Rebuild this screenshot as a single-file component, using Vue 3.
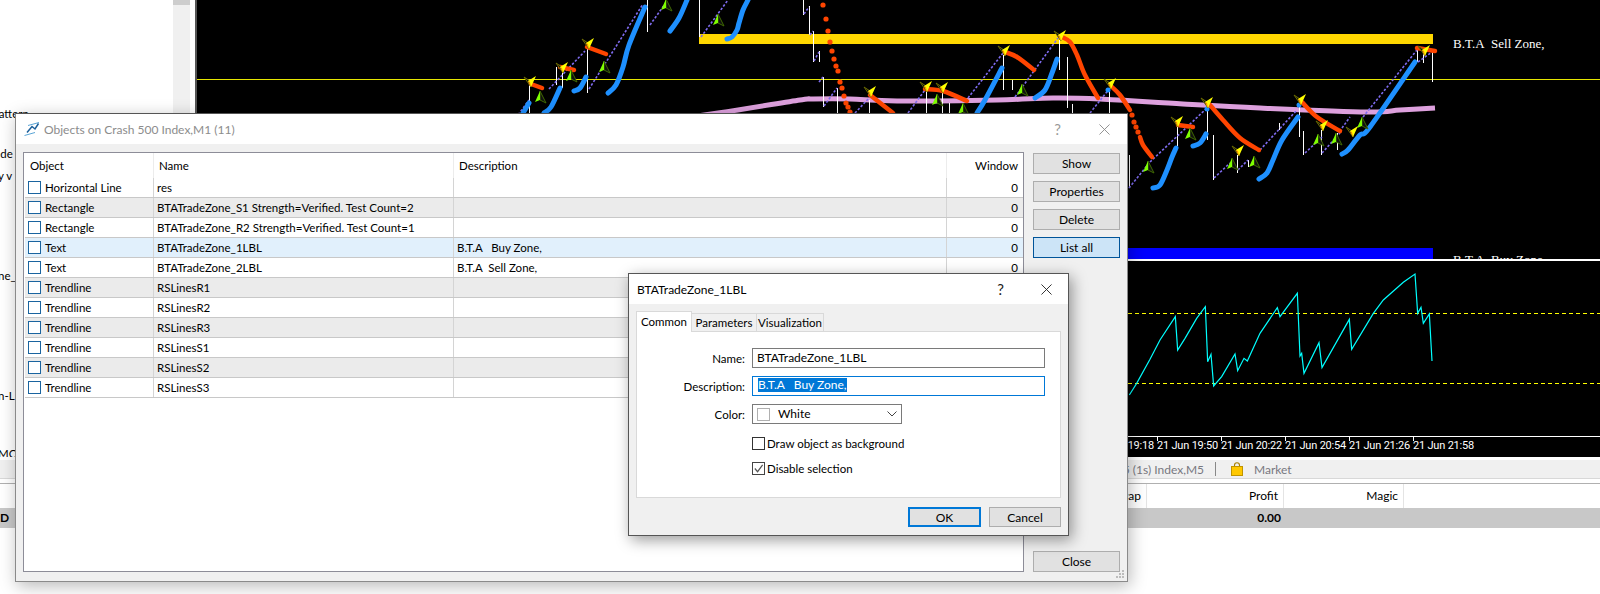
<template>
  <div class="screen">
    <!-- terminal behind the dialogs -->
    <div class="terminal">
      <div class="top-area">
        <aside class="navigator">
          <div class="nav-list">
            <div class="nav-lines">
              <div class="nav-line line-1">Pattern</div>
              <div class="nav-line line-2">Trade</div>
              <div class="nav-line line-3">y v</div>
              <div class="nav-line line-4">ne_</div>
              <div class="nav-line line-5">n-L</div>
              <div class="nav-line line-6">MO</div>
            </div>
            <div class="nav-foot"></div>
          </div>
          <div class="nav-scroll"><div class="nav-thumb"></div></div>
        </aside>
        <div class="charts">
          <div class="main-chart">
            <svg class="chart-svg" viewBox="197 0 1403 259" width="1403" height="259">
              <rect x="699" y="34" width="734" height="10" fill="#ffd700" />
              <rect x="699" y="248" width="734" height="11" fill="#0000ff" />
              <line x1="197" y1="79.5" x2="1600" y2="79.5" stroke="#e6e600" stroke-width="1" />
              <path :d="smooth(pinkLine)" fill="none" stroke="#dda0dd" stroke-width="5" />
              <line v-for="(w, i) in wicks" :key="'w' + i" :x1="w[0] + 0.5" :y1="w[1]" :x2="w[0] + 0.5" :y2="w[2]" stroke="#fff" stroke-width="1" shape-rendering="crispEdges" />
              <line v-for="(p, i) in rises" :key="'p' + i" :x1="p[0]" :y1="p[1]" :x2="p[2]" :y2="p[3]" stroke="#7f6cf0" stroke-width="1.6" stroke-dasharray="2.4 1.8" />
              <path v-for="(b, i) in blueCurves" :key="'b' + i" :d="smooth(b)" fill="none" stroke="#1e90ff" stroke-width="5" stroke-linecap="round" stroke-linejoin="round" />
              <path v-for="(r, i) in redCurves" :key="'r' + i" :d="smooth(r)" fill="none" stroke="#ff4500" stroke-width="4.5" stroke-linecap="round" stroke-linejoin="round" />
              <circle v-for="(d, i) in redDots" :key="'d' + i" :cx="d[0]" :cy="d[1]" r="2.6" fill="#ff4500" />
              <circle v-for="(d, i) in blueDots" :key="'bd' + i" :cx="d[0]" :cy="d[1]" r="2.5" fill="#1e90ff" />
              <g v-for="(a, i) in yellowArrows" :key="'y' + i" :transform="`translate(${a[0]} ${a[1]})`">
                <path d="M-6 -5 L0 -1 L1 5 Z" fill="#111" stroke="#6b6b00" stroke-width="1" />
                <path d="M6 -6 L-2 -1 L1 5 Z" fill="#ffff00" />
                <path d="M-2 -1 L1 5 L0 0 Z" fill="#ff8c00" />
              </g>
              <g v-for="(a, i) in greenArrows" :key="'g' + i" :transform="`translate(${a[0]} ${a[1]})`">
                <path d="M0 -6 L6 6 L0 3 Z" fill="#111" stroke="#3f6a00" stroke-width="1" />
                <path d="M0 -6 L-5 5 L0 3 Z" fill="#7fff00" />
              </g>
            </svg>
            <span class="zone-label sell">B.T.A&nbsp; Sell Zone,</span>
            <span class="zone-label buy">B.T.A&nbsp; Buy Zone,</span>
          </div>
          <div class="sub-chart">
            <svg class="chart-svg" viewBox="197 261 1403 175" width="1403" height="175">
              <line x1="197" y1="313.5" x2="1600" y2="313.5" stroke="#ffff00" stroke-dasharray="4 3" />
              <line x1="197" y1="383.5" x2="1600" y2="383.5" stroke="#ffff00" stroke-dasharray="4 3" />
              <polyline :points="cyanLine" fill="none" stroke="#00ffff" stroke-width="1.2" />
            </svg>
          </div>
          <div class="time-axis">
            <div v-for="t in timeLabels" :key="t" class="tick">{{ t }}</div>
          </div>
        </div>
      </div>

      <div class="tab-bar">
        <span class="tab-name">Volatility 75 (1s) Index,M5</span>
        <span class="tab-sep"></span>
        <svg class="lock" viewBox="0 0 12 14" width="12" height="14">
          <path d="M3.5 5 V3.2 A2.5 2.5 0 0 1 8.5 3.2 V5" fill="none" stroke="#a87f00" stroke-width="1.1" />
          <rect x="0.5" y="4.5" width="11" height="9" fill="#ffc800" stroke="#c09400" />
        </svg>
        <span class="tab-market">Market</span>
      </div>

      <div class="trade-head">
        <span class="col-swap">Swap</span>
        <span class="col-profit">Profit</span>
        <span class="col-magic">Magic</span>
        <span class="col-rest"></span>
      </div>
      <div class="trade-total">
        <span class="total-cur">D</span>
        <span class="total-profit">0.00</span>
      </div>
    </div>

    <!-- objects list window -->
    <section class="objects-window">
      <header class="win-title">
        <svg class="win-icon" viewBox="0 0 16 16" width="16" height="16">
          <path d="M4 4.5 L15 1.5 M0.5 14.5 L11 11.5" stroke="#5aa5d6" stroke-width="1" fill="none" />
          <path d="M3 11.5 L8 5.5 L11 8 L14.5 2.5" stroke="#1c5f9a" stroke-width="1.5" fill="none" />
        </svg>
        <span class="win-caption">Objects on Crash 500 Index,M1 (11)</span>
        <span class="help muted">?</span>
        <svg class="close-x" viewBox="0 0 12 12" width="11" height="11"><path d="M0.5 0.5 L11.5 11.5 M11.5 0.5 L0.5 11.5" stroke="#8a8a8a" stroke-width="1" /></svg>
      </header>
      <div class="win-body">
        <div class="object-list">
          <div class="list-row list-head">
            <span class="cell">Object</span>
            <span class="cell">Name</span>
            <span class="cell">Description</span>
            <span class="cell num">Window</span>
          </div>
          <div
            v-for="(row, i) in objects"
            :key="row.name"
            class="list-row"
            :class="{ odd: i % 2 === 1, picked: row.name === 'BTATradeZone_1LBL' }"
          >
            <span class="cell obj"><i class="obj-check"></i>{{ row.type }}</span>
            <span class="cell nm">{{ row.name }}</span>
            <span class="cell desc">{{ row.desc }}</span>
            <span class="cell num">0</span>
          </div>
        </div>
        <div class="side-buttons">
          <div class="side-top">
            <button class="btn">Show</button>
            <button class="btn">Properties</button>
            <button class="btn">Delete</button>
            <button class="btn active">List all</button>
          </div>
          <button class="btn">Close</button>
        </div>
      </div>
      <svg class="grip" viewBox="0 0 9 9" width="9" height="9">
        <path d="M6 0h2v2h-2z M3 3h2v2h-2z M6 3h2v2h-2z M0 6h2v2h-2z M3 6h2v2h-2z M6 6h2v2h-2z" fill="#bcbcbc" />
      </svg>
    </section>

    <!-- properties dialog -->
    <section class="prop-dialog">
      <header class="dlg-title">
        <span class="dlg-caption">BTATradeZone_1LBL</span>
        <span class="help">?</span>
        <svg class="close-x" viewBox="0 0 12 12" width="11" height="11"><path d="M0.5 0.5 L11.5 11.5 M11.5 0.5 L0.5 11.5" stroke="#222" stroke-width="1" /></svg>
      </header>
      <div class="dlg-body">
        <div class="tabs">
          <span class="tab current">Common</span>
          <span class="tab tab-params">Parameters</span>
          <span class="tab tab-vis">Visualization</span>
        </div>
        <div class="tab-panel">
          <div class="form">
            <label>Name:</label>
            <div class="field">BTATradeZone_1LBL</div>
            <label>Description:</label>
            <div class="field focus"><span class="selected">B.T.A&nbsp;&nbsp; Buy Zone,</span></div>
            <label>Color:</label>
            <div class="field select">
              <i class="swatch"></i>
              <span>White</span>
              <svg class="chev" viewBox="0 0 10 6" width="10" height="6"><path d="M0.5 0.5 L5 5 L9.5 0.5" fill="none" stroke="#444" /></svg>
            </div>
            <span></span>
            <div class="check-line"><i class="dlg-check"></i>Draw object as background</div>
            <span></span>
            <div class="check-line second">
              <i class="dlg-check on">
                <svg viewBox="0 0 12 12" width="11" height="11"><path d="M2 6 L5 9.5 L10.5 2" fill="none" stroke="#555" stroke-width="1.3" /></svg>
              </i>
              Disable selection
            </div>
          </div>
        </div>
        <div class="dlg-actions">
          <button class="btn ok">OK</button>
          <button class="btn cancel">Cancel</button>
        </div>
      </div>
    </section>
  </div>
</template>

<script setup>
const objects = [
  { type: 'Horizontal Line', name: 'res', desc: '' },
  { type: 'Rectangle', name: 'BTATradeZone_S1 Strength=Verified. Test Count=2', desc: '' },
  { type: 'Rectangle', name: 'BTATradeZone_R2 Strength=Verified. Test Count=1', desc: '' },
  { type: 'Text', name: 'BTATradeZone_1LBL', desc: 'B.T.A   Buy Zone,' },
  { type: 'Text', name: 'BTATradeZone_2LBL', desc: 'B.T.A  Sell Zone,' },
  { type: 'Trendline', name: 'RSLinesR1', desc: '' },
  { type: 'Trendline', name: 'RSLinesR2', desc: '' },
  { type: 'Trendline', name: 'RSLinesR3', desc: '' },
  { type: 'Trendline', name: 'RSLinesS1', desc: '' },
  { type: 'Trendline', name: 'RSLinesS2', desc: '' },
  { type: 'Trendline', name: 'RSLinesS3', desc: '' }
]

const timeLabels = ['21 Jun 19:18', '21 Jun 19:50', '21 Jun 20:22', '21 Jun 20:54', '21 Jun 21:26', '21 Jun 21:58']

// chart data in page coordinates, read off the screenshot
const pinkLine = '600,130 718,113 800,100 813,99 850,99 897,101 997,100 1053,98 1100,99 1183,104 1260,108 1367,112 1400,110 1435,108'

const blueCurves = [
  '500,152 529,103',
  '544,113 551,107 560,88',
  '574,91 580,88 586,77',
  '608,93 616,85 623,67 629,45 645,7',
  '670,31 679,18 687,0',
  '727,39 732,37 737,30 739,23 743,10 748,0',
  '977,113 985,100 1002,68',
  '1035,98 1045,90 1052,73 1057,59',
  '1153,188 1160,185 1167,170 1172,157 1176,148',
  '1193,146 1200,143 1206,134',
  '1259,179 1267,173 1273,160 1282,140 1298,117',
  '1342,154 1348,150 1360,135 1370,127 1415,62'
]

const redCurves = [
  '531,84 542,88',
  '560,67 574,70',
  '587,47 606,54',
  '870,95 893,113',
  '925,89 943,91 967,101',
  '1005,52 1017,57 1034,70',
  '1062,37 1070,42 1077,55 1085,75 1098,98',
  '1112,87 1120,95 1130,110',
  '1140,137 1143,145 1152,157',
  '1178,125 1193,127',
  '1210,105 1223,120 1240,138 1259,150',
  '1302,102 1317,117 1340,131',
  '1417,48 1435,51'
]

const redDots = [
  [823, 5], [826, 19], [828, 31], [830, 42], [832, 51], [834, 59], [836, 66], [838, 71],
  [840, 82], [842, 88], [844, 96], [846, 103], [848, 107], [850, 112],
  [1132, 115], [1134, 122], [1136, 127], [1138, 132]
]

const blueDots = [[1108, 90], [1207, 109], [1299, 105]]

const rises = [
  [491, 152, 529, 100], [549, 89, 585, 51], [589, 89, 643, 4], [650, 25, 665, 4], [701, 37, 728, 0],
  [804, 14, 809, 7], [810, 35, 813, 31], [814, 61, 819, 52], [819, 82, 823, 77], [824, 106, 837, 88],
  [855, 113, 870, 97], [908, 113, 925, 90], [968, 98, 1003, 53], [1015, 97, 1058, 38], [1090, 113, 1110, 88],
  [1129, 188, 1150, 162], [1150, 162, 1207, 108], [1214, 178, 1230, 163], [1238, 170, 1248, 160],
  [1260, 150, 1297, 110], [1305, 153, 1322, 137], [1322, 153, 1340, 133], [1342, 128, 1350, 117],
  [1363, 117, 1417, 50], [1418, 62, 1432, 52]
]

const wicks = [
  [529, 85, 113], [556, 67, 85], [562, 67, 88], [587, 47, 93], [647, 0, 32], [699, 0, 37],
  [803, 0, 15], [809, 6, 35], [813, 31, 62], [819, 51, 62], [823, 77, 107], [837, 88, 113],
  [869, 100, 113], [926, 90, 113], [942, 90, 113], [949, 103, 113], [1003, 55, 90], [1012, 80, 90],
  [1059, 40, 70], [1067, 57, 108], [1072, 104, 113], [1109, 90, 113],
  [1129, 155, 188], [1177, 125, 146], [1207, 110, 140], [1213, 135, 180], [1237, 155, 173], [1248, 160, 167],
  [1279, 123, 130], [1299, 105, 137], [1303, 131, 155], [1321, 130, 155], [1337, 133, 150],
  [1417, 50, 62], [1423, 52, 63], [1432, 50, 82]
]

const yellowArrows = [
  [530, 82], [562, 68], [588, 44], [870, 92], [926, 87], [942, 88], [1004, 51], [1060, 36], [1110, 84],
  [1177, 122], [1207, 103], [1238, 151], [1300, 100], [1322, 126], [1352, 132], [1424, 51]
]

const greenArrows = [
  [540, 97], [571, 76], [604, 67], [666, 5], [718, 20], [937, 100], [963, 109], [1022, 90],
  [1148, 167], [1190, 134], [1232, 164], [1254, 162], [1318, 140], [1336, 139], [1362, 123]
]

const cyanPts = [
  [268, 435], [290, 400], [330, 328], [360, 270], [406, 200], [413, 300], [435, 265], [470, 205], [496, 170],
  [503, 335], [513, 313], [521, 408], [545, 380], [585, 312], [593, 362], [612, 325], [622, 333], [660, 250],
  [712, 173], [720, 200], [772, 130], [780, 318], [785, 310], [792, 370], [837, 278], [846, 353], [928, 208],
  [935, 298], [1000, 190], [1030, 150], [1090, 97], [1125, 72], [1133, 190], [1143, 172], [1150, 220],
  [1168, 192], [1176, 333]
]
const cyanLine = cyanPts.map(p => `${1040 + p[0] / 3},${250 + p[1] / 3}`).join(' ')

// catmull-rom through the points, the curves in the chart have no corners
const smooth = (str) => {
  const p = str.split(' ').map(s => s.split(',').map(Number))
  let d = `M${p[0][0]} ${p[0][1]}`
  for (let i = 0; i < p.length - 1; i++) {
    const a = p[i - 1] || p[i]
    const b = p[i]
    const c = p[i + 1]
    const e = p[i + 2] || c
    d += ` C${b[0] + (c[0] - a[0]) / 6} ${b[1] + (c[1] - a[1]) / 6} ${c[0] - (e[0] - b[0]) / 6} ${c[1] - (e[1] - b[1]) / 6} ${c[0]} ${c[1]}`
  }
  return d
}
</script>

<style>
html, body {
  margin: 0;
  background: #fff;
  overflow: hidden;
}
</style>

<style scoped>
.screen {
  position: relative;
  width: 1600px;
  height: 594px;
  overflow: hidden;
  background: #fff;
  font-family: Lato, Roboto, sans-serif;
  font-size: 11.5px;
  color: #000;
}

/* terminal */
.terminal {
  display: flex;
  flex-direction: column;
  height: 100%;
}

.top-area {
  display: flex;
  height: 457px;
}

.navigator {
  display: flex;
  width: 197px;
  flex-shrink: 0;
  background: #fff;
  border-right: 2px solid #555;
  box-sizing: border-box;
}

.nav-list {
  display: flex;
  flex-direction: column;
  justify-content: space-between;
  width: 173px;
  overflow: hidden;
}

.nav-foot {
  height: 3px;
  background: #f0f0f0;
  border-top: 1px solid #333;
}

.nav-line {
  white-space: nowrap;
  height: 16px;
  line-height: 16px;
}

.line-1 { margin-top: 106px; margin-left: -8px; }
.line-2 { margin-top: 24px; margin-left: -15px; }
.line-3 { margin-top: 6px; margin-left: -2px; }
.line-4 { margin-top: 84px; margin-left: -2px; }
.line-5 { margin-top: 104px; margin-left: -2px; }
.line-6 { margin-top: 42px; margin-left: -2px; }

.nav-scroll {
  width: 17px;
  background: #f0f0f0;
}

.nav-thumb {
  height: 5px;
  background: #cdcdcd;
}

.charts {
  flex: 1;
  display: flex;
  flex-direction: column;
  background: #000;
}

.main-chart {
  position: relative;
  height: 259px;
  overflow: hidden;
  border-bottom: 2px solid #fff;
}

.chart-svg {
  display: block;
}

.zone-label {
  position: absolute;
  left: 1256px;
  font-family: "Liberation Serif", serif;
  font-size: 13px;
  color: #fff;
  white-space: nowrap;
}

.sell { top: 36px; }
.buy { top: 252px; }

.sub-chart {
  height: 175px;
  overflow: hidden;
  border-bottom: 1px solid #fff;
}

.time-axis {
  display: flex;
  padding-left: 896px;
  height: 20px;
  color: #fff;
  font-family: Roboto, sans-serif;
  font-size: 11px;
  letter-spacing: -0.2px;
  line-height: 18px;
}

.tick {
  position: relative;
  width: 64px;
  flex-shrink: 0;
  white-space: nowrap;
}

.tick::before {
  content: "";
  position: absolute;
  left: 0;
  top: 0;
  height: 4px;
  border-left: 1px solid #fff;
}

.tab-bar {
  display: flex;
  align-items: center;
  height: 19px;
  margin-top: 3px;
  padding-left: 1040px;
  background: #f0f0f0;
  color: #787880;
  font-size: 12px;
  border-bottom: 1px solid #d8d8d8;
  white-space: nowrap;
  box-sizing: border-box;
}

.tab-name {
  width: 164px;
  text-align: right;
  flex-shrink: 0;
}

.tab-sep {
  width: 1px;
  height: 14px;
  background: #888;
  margin: 0 15px 0 11px;
}

.lock {
  margin-right: 11px;
}

.trade-head {
  display: flex;
  height: 25px;
  margin-top: 4px;
  border-top: 1px solid #b0b0b0;
  box-sizing: border-box;
  font-size: 12px;
  line-height: 24px;
}

.trade-head span {
  box-sizing: border-box;
  text-align: right;
  padding-right: 5px;
  border-right: 1px solid #e4e4e4;
}

.col-swap { width: 1147px; }
.col-profit { width: 137px; }
.col-magic { width: 120px; }
.col-rest { flex: 1; border-right: none !important; }

.trade-total {
  display: flex;
  justify-content: space-between;
  height: 20px;
  line-height: 20px;
  background: #c8c8c8;
  font-size: 12px;
  font-weight: 700;
}

.total-profit {
  width: 1281px;
  text-align: right;
  margin-right: auto;
}

.total-cur {
  width: 0;
}

/* objects window */
.objects-window {
  position: absolute;
  left: 15px;
  top: 113px;
  width: 1113px;
  height: 469px;
  display: flex;
  flex-direction: column;
  background: #f0f0f0;
  border: 1px solid #8a8a8a;
  border-top-color: #555;
  box-sizing: border-box;
  box-shadow: 2px 4px 16px rgba(0, 0, 0, 0.28);
}

.win-title,
.dlg-title {
  display: flex;
  align-items: center;
  background: #fff;
  flex-shrink: 0;
}

.win-title {
  height: 30px;
  padding-left: 8px;
}

.win-icon {
  margin-right: 4px;
}

.win-caption {
  flex: 1;
  color: #8c8c8c;
  font-size: 12px;
}

.dlg-caption {
  flex: 1;
  font-size: 12px;
}

.help {
  font-size: 15px;
  color: #222;
}

.help.muted {
  color: #9a9a9a;
}

.win-title .help { margin-right: 38px; }
.win-title .close-x { margin-right: 17px; }

.win-body {
  flex: 1;
  display: flex;
  gap: 9px;
  padding: 8px 7px 9px 7px;
  min-height: 0;
}

.object-list {
  width: 1001px;
  box-sizing: border-box;
  background: #fff;
  border: 1px solid #8d8d98;
  padding-left: 1px;
}

.list-row {
  display: grid;
  grid-template-columns: 129px 300px 493px 76px;
  height: 20px;
  box-sizing: border-box;
  border-bottom: 1px solid #c8c8c8;
  line-height: 20px;
}

.list-row.odd { background: #ebebeb; }
.list-row.picked { background: #e1f0fc; }

.list-head {
  height: 25px;
  line-height: 26px;
  border-bottom: none;
}

.cell {
  box-sizing: border-box;
  padding-left: 3px;
  border-right: 1px solid #d4d4d4;
  white-space: pre;
  overflow: hidden;
}

.list-head .cell {
  padding-left: 5px;
  border-right-color: #ececec;
}

.cell.num {
  text-align: right;
  padding-right: 5px;
  border-right: none;
}

.obj {
  display: flex;
  align-items: center;
  padding-left: 3px;
}

.obj-check {
  width: 13px;
  height: 13px;
  box-sizing: border-box;
  border: 1px solid #1a649f;
  background: #fff;
  margin-right: 4px;
  flex-shrink: 0;
}

.side-buttons {
  display: flex;
  flex-direction: column;
  justify-content: space-between;
  width: 88px;
}

.side-top {
  display: flex;
  flex-direction: column;
  gap: 7px;
  margin-top: 1px;
}

.btn {
  height: 21px;
  padding: 0;
  font-family: inherit;
  font-size: 12px;
  color: #000;
  background: #e1e1e1;
  border: 1px solid #adadad;
  box-sizing: border-box;
}

.btn.active {
  background: #cce4f7;
  border-color: #005499;
}

.grip {
  position: absolute;
  right: 2px;
  bottom: 2px;
}

/* properties dialog */
.prop-dialog {
  position: absolute;
  left: 628px;
  top: 273px;
  width: 441px;
  height: 263px;
  display: flex;
  flex-direction: column;
  background: #f0f0f0;
  border: 1px solid #555;
  box-sizing: border-box;
  box-shadow: 3px 4px 14px rgba(0, 0, 0, 0.4);
}

.dlg-title {
  height: 30px;
  padding-left: 8px;
}

.prop-dialog .help { margin-right: 37px; }
.prop-dialog .close-x { margin-right: 16px; }

.dlg-body {
  flex: 1;
  display: flex;
  flex-direction: column;
  padding: 7px 7px 8px 7px;
  min-height: 0;
}

.tabs {
  display: flex;
  align-items: flex-end;
  height: 21px;
  position: relative;
  z-index: 1;
  margin-bottom: -1px;
}

.tab {
  height: 19px;
  line-height: 17px;
  text-align: center;
  box-sizing: border-box;
  border: 1px solid #d9d9d9;
  border-bottom: none;
  margin-left: -1px;
  color: #000;
}

.tab:first-child { margin-left: 0; }

.tab.current {
  height: 21px;
  line-height: 19px;
  width: 56px;
  background: #fff;
}

.tab-params { width: 66px; }
.tab-vis { width: 68px; }

.tab-panel {
  flex: 1;
  background: #fff;
  border: 1px solid #d9d9d9;
  box-sizing: border-box;
  padding: 16px 15px 0 0;
}

.form {
  display: grid;
  grid-template-columns: 108px 1fr;
  column-gap: 7px;
  row-gap: 8px;
  align-items: center;
}

.form label {
  text-align: right;
}

.field {
  height: 20px;
  line-height: 18px;
  box-sizing: border-box;
  border: 1px solid #7a7a7a;
  padding-left: 4px;
  background: #fff;
  font-size: 12px;
  white-space: nowrap;
}

.field.focus {
  border-color: #0078d7;
  padding-left: 5px;
}

.selected {
  display: inline-block;
  width: 89px;
  height: 14px;
  line-height: 13px;
  background: #0078d7;
  color: #fff;
  vertical-align: 1px;
}

.field.select {
  display: flex;
  align-items: center;
  width: 150px;
}

.swatch {
  width: 13px;
  height: 13px;
  box-sizing: border-box;
  border: 1px solid #b0b0b0;
  margin-right: 8px;
}

.chev {
  margin-left: auto;
  margin-right: 4px;
}

.check-line {
  display: flex;
  align-items: center;
  margin-top: 3px;
  height: 17px;
}

.check-line.second {
  margin-top: 0;
}

.dlg-check {
  width: 13px;
  height: 13px;
  box-sizing: border-box;
  border: 1px solid #333;
  background: #fff;
  margin-right: 2px;
  display: flex;
  align-items: center;
  justify-content: center;
}

.dlg-check.on {
  border-color: #444;
}

.dlg-actions {
  display: flex;
  justify-content: flex-end;
  gap: 8px;
  margin-top: 9px;
}

.dlg-actions .btn {
  height: 20px;
}

.btn.ok {
  width: 73px;
  border: 2px solid #0078d7;
}

.btn.cancel {
  width: 72px;
}
</style>
